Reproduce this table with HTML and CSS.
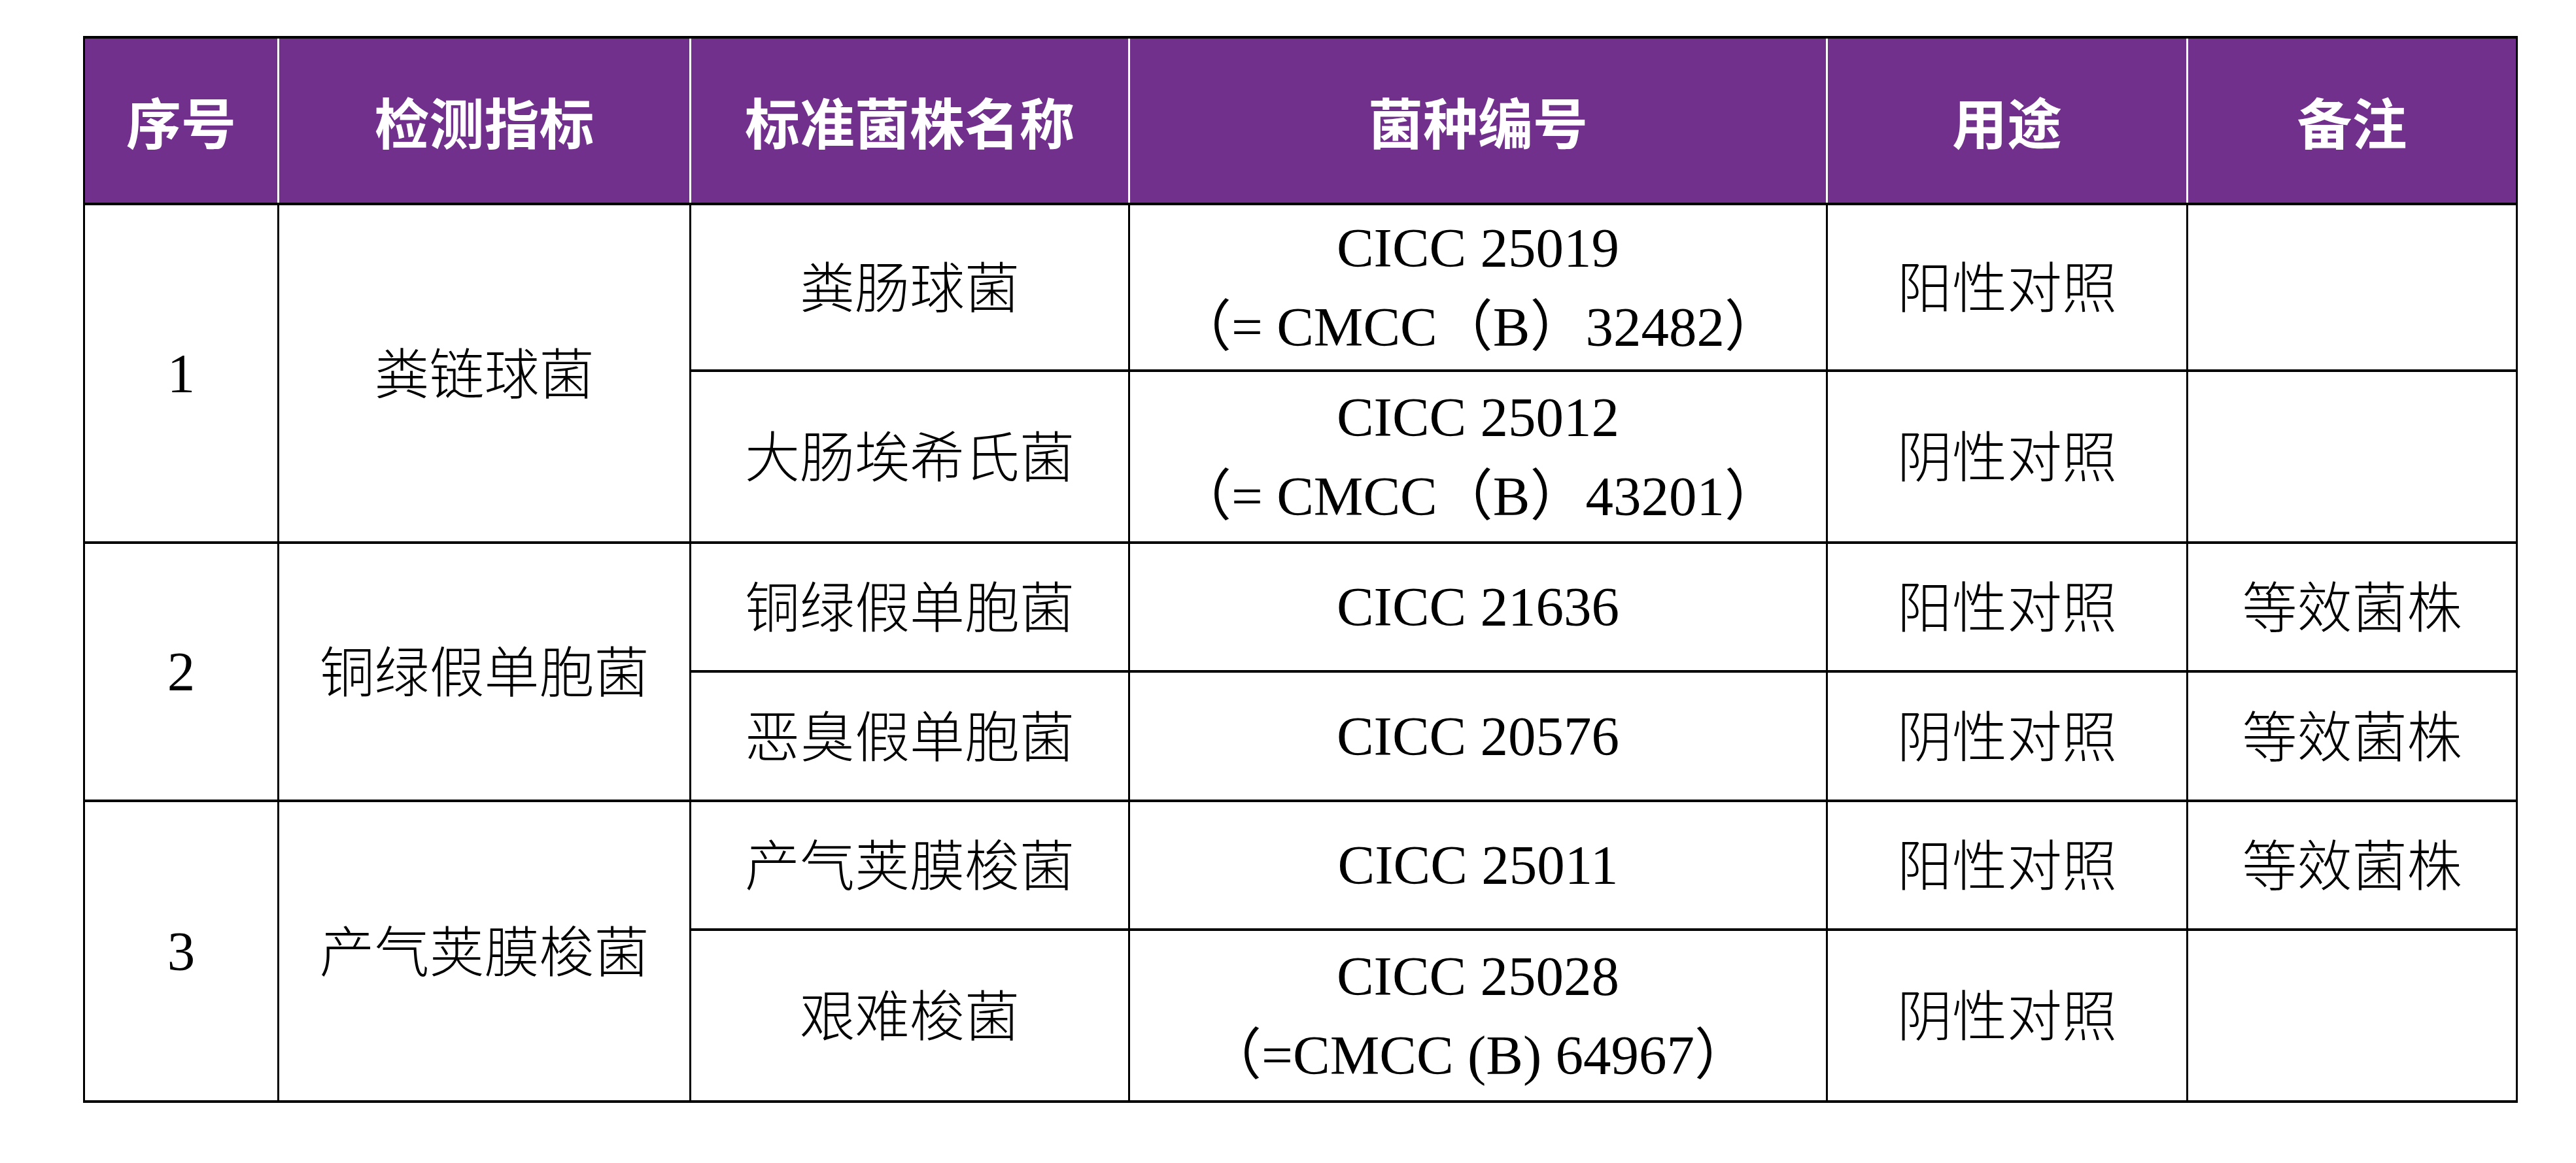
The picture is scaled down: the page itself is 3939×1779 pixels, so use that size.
FILE: index.html
```html
<!DOCTYPE html>
<html lang="zh-CN">
<head>
<meta charset="utf-8">
<title>标准菌株</title>
<link rel="stylesheet" href="styles.css">
</head>
<body>
<div class="page">
  <div class="grid">
    <div class="th">序号</div>
    <div class="th">检测指标</div>
    <div class="th">标准菌株名称</div>
    <div class="th">菌种编号</div>
    <div class="th">用途</div>
    <div class="th th-last">备注</div>

    <div class="td span2">1</div>
    <div class="td span2 cjk">粪链球菌</div>
    <div class="td cjk">粪肠球菌</div>
    <div class="td"><span>CICC 25019</span><span>（= CMCC（B）32482）</span></div>
    <div class="td cjk">阳性对照</div>
    <div class="td"></div>

    <div class="td cjk">大肠埃希氏菌</div>
    <div class="td"><span>CICC 25012</span><span>（= CMCC（B）43201）</span></div>
    <div class="td cjk">阴性对照</div>
    <div class="td"></div>

    <div class="td span2">2</div>
    <div class="td span2 cjk">铜绿假单胞菌</div>
    <div class="td cjk">铜绿假单胞菌</div>
    <div class="td">CICC 21636</div>
    <div class="td cjk">阳性对照</div>
    <div class="td cjk">等效菌株</div>

    <div class="td cjk">恶臭假单胞菌</div>
    <div class="td">CICC 20576</div>
    <div class="td cjk">阴性对照</div>
    <div class="td cjk">等效菌株</div>

    <div class="td span2">3</div>
    <div class="td span2 cjk">产气荚膜梭菌</div>
    <div class="td cjk">产气荚膜梭菌</div>
    <div class="td">CICC 25011</div>
    <div class="td cjk">阳性对照</div>
    <div class="td cjk">等效菌株</div>

    <div class="td cjk">艰难梭菌</div>
    <div class="td"><span>CICC 25028</span><span>（=CMCC (B) 64967）</span></div>
    <div class="td cjk">阴性对照</div>
    <div class="td"></div>
  </div>
</div>
</body>
</html>
```

FILE: styles.css
```css
html, body {
  margin: 0;
  background: #ffffff;
}

body {
  font-family: "Liberation Serif", "Noto Sans CJK SC", serif;
  color: #000000;
}

.page {
  padding: 55px 0 0 127px;
}

.grid {
  display: grid;
  box-sizing: border-box;
  width: 3723px;
  background: #000000;
  padding: 4px 3px;
  gap: 4px 3px;
  grid-template-columns: 294px 627px 668px 1064px 548px 501px;
  grid-template-rows: 251px 251px 259px 193px 194px 193px 259px;
}

.th {
  background: #70308c;
  color: #ffffff;
  font-family: "Noto Sans CJK SC", sans-serif;
  font-weight: 700;
  font-size: 84px;
  display: flex;
  align-items: center;
  justify-content: center;
  box-shadow: 3px 0 0 #ffffff;
}

.th-last {
  box-shadow: none;
}

.td {
  background: #ffffff;
  display: flex;
  flex-direction: column;
  align-items: center;
  justify-content: center;
  text-align: center;
  font-size: 85px;
  line-height: 121px;
  white-space: nowrap;
}

.cjk {
  box-sizing: border-box;
  padding-bottom: 10px;
  font-family: "Noto Sans CJK SC", sans-serif;
  font-weight: 300;
  font-size: 84px;
}

.span2 {
  grid-row: span 2;
}
```
